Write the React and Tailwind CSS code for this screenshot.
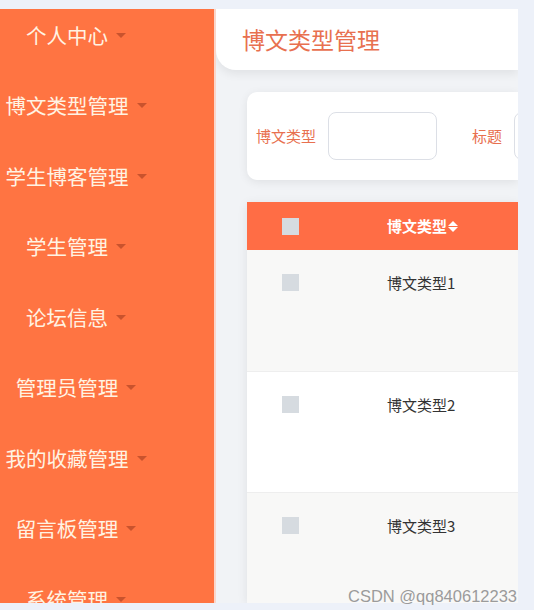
const menus = ['个人中心', '博文类型管理', '学生博客管理', '学生管理', '论坛信息', '管理员管理', '我的收藏管理', '留言板管理', '系统管理'];

const rows = [
  { id: 1, name: '博文类型1', h: 'h-[122px]', bg: 'bg-[#f8f8f7]' },
  { id: 2, name: '博文类型2', h: 'h-[121px]', bg: 'bg-white' },
  { id: 3, name: '博文类型3', h: 'h-[121px]', bg: 'bg-[#f8f8f7]' },
];

function Caret() {
  return (
    <span className="ml-[8px] inline-block h-0 w-0 border-x-[5px] border-t-[5px] border-x-transparent border-t-[#c9532d]" />
  );
}

function SortIcon() {
  return (
    <span className="ml-[1px] inline-flex flex-col gap-[1px]">
      <span className="h-0 w-0 border-x-[5px] border-b-[5px] border-x-transparent border-b-white" />
      <span className="h-0 w-0 border-x-[5px] border-t-[5px] border-x-transparent border-t-white" />
    </span>
  );
}

function Checkbox() {
  return <span className="block h-[17px] w-[17px] bg-[#d6dbe0]" />;
}

export default function App() {
  return (
    <div
      className="relative flex h-[610px] w-[534px] overflow-hidden bg-[#edf1f9] pb-[7px] pr-[16px] pt-[9px]"
      style={{ fontFamily: '"Noto Sans CJK SC", "Liberation Sans", sans-serif' }}
    >
      <aside className="h-full w-[214px] shrink-0 overflow-hidden bg-[#ff7442]">
        <ul className="-mt-[9px] w-[152px]">
          {menus.map((m) => (
            <li key={m} className="flex h-[70.5px] items-center justify-center text-[20.5px] text-[#fff3e3]">
              <span>{m}</span>
              <Caret />
            </li>
          ))}
        </ul>
      </aside>

      <main className="flex h-full flex-1 flex-col overflow-hidden border-l-2 border-[#fbd6ca] bg-[#f1f3f6]">
        <header className="flex h-[61px] shrink-0 items-center rounded-bl-[20px] bg-white pl-[26px] shadow-[0_4px_10px_rgba(0,0,0,0.07)]">
          <h1 className="text-[23px] leading-none text-[#e8704f]">博文类型管理</h1>
        </header>

        <div className="ml-[31px] mt-[22px] flex h-[88px] shrink-0 items-center whitespace-nowrap rounded-l-[10px] bg-white pl-[9px] shadow-[0_2px_10px_rgba(0,0,0,0.08)]">
          <span className="text-[15px] text-[#e8704f]">博文类型</span>
          <div className="ml-[12px] h-[48px] w-[109px] shrink-0 rounded-[8px] border border-[#dcdfe6] bg-white" />
          <span className="ml-[35px] text-[15px] text-[#e8704f]">标题</span>
          <div className="ml-[12px] h-[48px] w-[109px] shrink-0 rounded-[8px] border border-[#dcdfe6] bg-white" />
        </div>

        <div className="ml-[31px] mt-[22px] flex-1 overflow-hidden bg-white shadow-[0_2px_10px_rgba(0,0,0,0.08)]">
          <div className="flex h-[48px] items-center bg-[#ff6d45]">
            <div className="w-[140px] pl-[35px]">
              <Checkbox />
            </div>
            <div className="flex items-center text-[15px] font-bold text-white">
              博文类型
              <SortIcon />
            </div>
          </div>
          {rows.map((r) => (
            <div key={r.id} className={`flex items-start border-b border-[#eeeeee] ${r.h} ${r.bg}`}>
              <div className="w-[140px] pl-[35px] pt-[24px]">
                <Checkbox />
              </div>
              <div className="pt-[22px] text-[15px] text-[#333333]">{r.name}</div>
            </div>
          ))}
        </div>
      </main>

      <div
        className="absolute bottom-[6px] left-[348px] text-[16.5px] leading-none text-[#9b9b9b]"
        style={{ fontFamily: '"Liberation Sans", Arial, sans-serif' }}
      >
        CSDN @qq840612233
      </div>
    </div>
  );
}
